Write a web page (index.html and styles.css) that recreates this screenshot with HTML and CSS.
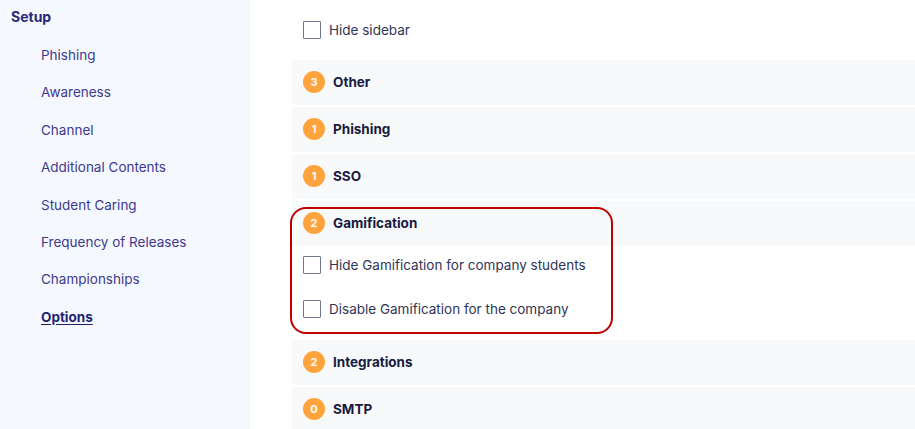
FILE: index.html
```html
<!DOCTYPE html>
<html lang="en">
<head>
    <meta charset="UTF-8">
    <meta name="viewport" content="width=device-width, initial-scale=1.0">
    <title>Setup - Options</title>
    <link rel="stylesheet" href="styles.css">
</head>
<body>
    <div class="layout">
        <aside class="sidebar">
            <div class="sidebar-title">Setup</div>
            <ul class="menu">
                <li><a href="#">Phishing</a></li>
                <li><a href="#">Awareness</a></li>
                <li><a href="#">Channel</a></li>
                <li><a href="#">Additional Contents</a></li>
                <li><a href="#">Student Caring</a></li>
                <li><a href="#">Frequency of Releases</a></li>
                <li><a href="#">Championships</a></li>
                <li><a href="#" class="active">Options</a></li>
            </ul>
        </aside>

        <main class="content">
            <label class="option top-option">
                <input type="checkbox">
                <span>Hide sidebar</span>
            </label>

            <div class="sections">
                <div class="section">
                    <div class="section-head"><span class="badge">3</span><span class="section-title">Other</span></div>
                </div>
                <div class="section">
                    <div class="section-head"><span class="badge">1</span><span class="section-title">Phishing</span></div>
                </div>
                <div class="section">
                    <div class="section-head"><span class="badge">1</span><span class="section-title">SSO</span></div>
                </div>
                <div class="section highlighted">
                    <div class="section-head"><span class="badge">2</span><span class="section-title">Gamification</span></div>
                    <div class="section-body">
                        <label class="option">
                            <input type="checkbox">
                            <span>Hide Gamification for company students</span>
                        </label>
                        <label class="option">
                            <input type="checkbox">
                            <span>Disable Gamification for the company</span>
                        </label>
                    </div>
                    <div class="highlight-ring"></div>
                </div>
                <div class="section">
                    <div class="section-head"><span class="badge">2</span><span class="section-title">Integrations</span></div>
                </div>
                <div class="section">
                    <div class="section-head"><span class="badge">0</span><span class="section-title">SMTP</span></div>
                </div>
            </div>
        </main>
    </div>
</body>
</html>
```

FILE: styles.css
```css
html, body {
    margin: 0;
    padding: 0;
    height: 100%;
}
body {
    font-family: Inter, "Liberation Sans", sans-serif;
    background: #ffffff;
    overflow: hidden;
}
.layout {
    display: flex;
    min-height: 100%;
}
.sidebar {
    width: 250px;
    flex-shrink: 0;
    background: #f5f8ff;
    padding-top: 7px;
    box-sizing: border-box;
}
.sidebar-title {
    padding-left: 11px;
    line-height: 20px;
    font-size: 14px;
    font-weight: 700;
    color: #2b2878;
}
.menu {
    list-style: none;
    margin: 10px 0 0;
    padding: 0 0 0 41px;
}
.menu li {
    height: 37.4px;
    font-size: 13.5px;
}
.menu a {
    display: block;
    line-height: 37.4px;
    color: #3d3a8e;
    text-decoration: none;
}
.menu a.active {
    display: inline-block;
    font-weight: 700;
    color: #221f73;
    text-decoration: underline;
    text-underline-offset: 2px;
}
.content {
    flex: 1;
    padding-left: 42px;
}
.option {
    display: flex;
    align-items: center;
    gap: 8px;
    height: 22px;
    padding-left: 11px;
    font-size: 13.5px;
    color: #2f3557;
    cursor: pointer;
}
.option input {
    appearance: none;
    -webkit-appearance: none;
    margin: 0;
    width: 18px;
    height: 18px;
    border: 1.5px solid #6f7693;
    border-radius: 1px;
    background: #fff;
    box-sizing: border-box;
    flex-shrink: 0;
}
.top-option {
    height: 60px;
}
.sections {
    display: flex;
    flex-direction: column;
    gap: 2px;
}
.section {
    position: relative;
}
.section-head {
    display: flex;
    align-items: center;
    gap: 8px;
    height: 45px;
    padding-left: 11px;
    padding-bottom: 2px;
    box-sizing: border-box;
    background: #f8f9fb;
}
.badge {
    width: 22px;
    height: 22px;
    border-radius: 50%;
    background: #ffa43d;
    color: #fff;
    font-size: 11px;
    font-weight: 700;
    display: flex;
    align-items: center;
    justify-content: center;
}
.section-title {
    font-size: 13.5px;
    font-weight: 700;
    color: #171b40;
}
.section-body {
    display: flex;
    flex-direction: column;
    gap: 22px;
    padding: 8px 0 18px;
}
.highlight-ring {
    position: absolute;
    left: -2px;
    top: 6px;
    width: 323px;
    height: 127px;
    border: 2.5px solid #c00000;
    border-radius: 16px;
    box-sizing: border-box;
    pointer-events: none;
}
```
